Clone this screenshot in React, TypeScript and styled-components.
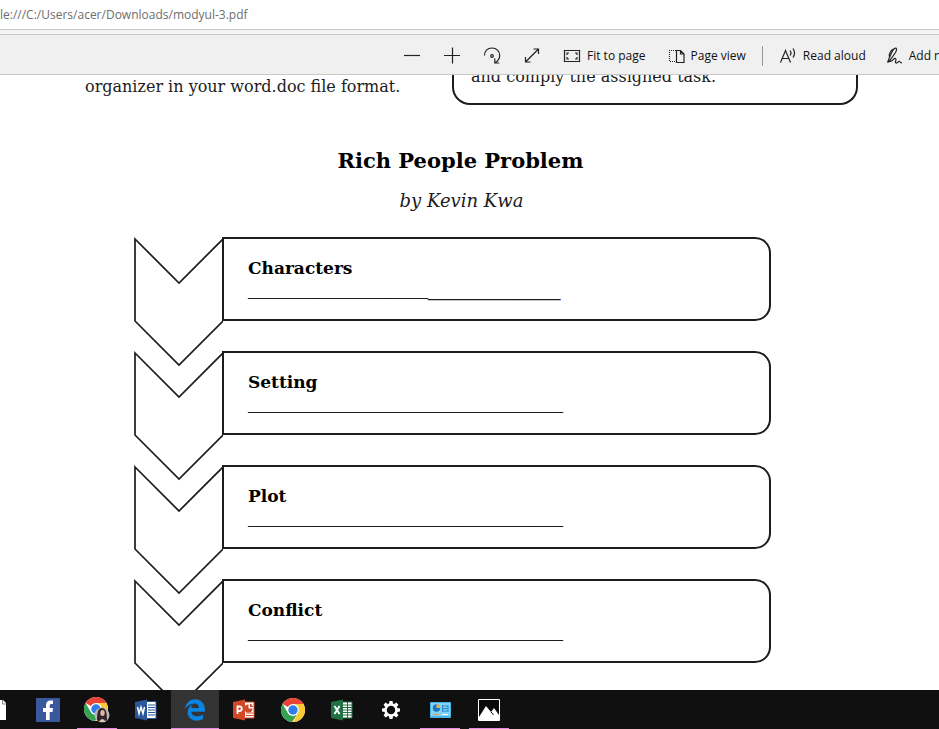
import React from "react";
import styled, { createGlobalStyle } from "styled-components";
import { FaEdgeLegacy } from "react-icons/fa6";

const GlobalStyle = createGlobalStyle`
  * { box-sizing: border-box; }
  body { margin: 0; background: #fff; }
  h1, h2, p { margin: 0; }
`;

const uiFont = `"Open Sans", "Noto Sans", sans-serif`;
const bookFont = `"DejaVu Serif", "Liberation Serif", serif`;
const ink = "#1c1c1c";

const Screen = styled.div`
  display: flex;
  flex-direction: column;
  height: 100vh;
  overflow: hidden;
`;

const AddressBar = styled.header`
  flex: none;
  height: 29px;
  font: 12px/30px ${uiFont};
  color: #6e6e6e;
  white-space: nowrap;
`;

const Divider = styled.div`
  flex: none;
  height: 6px;
  background: #f4f4f4;
  border-top: 1px solid #c8c8c8;
  border-bottom: 1px solid #c8c8c8;
`;

const Toolbar = styled.nav`
  flex: none;
  display: flex;
  align-items: center;
  height: 40px;
  padding: 2px 0 0 402px;
  background: #f0f0f0;
  border-bottom: 1px solid #c8c8c8;
  overflow: hidden;
`;

const ToolButton = styled.button<{ $gap?: number }>`
  flex: none;
  display: flex;
  align-items: center;
  gap: 6px;
  margin: 0 ${(p) => p.$gap ?? 20}px 0 0;
  padding: 0;
  border: 0;
  background: none;
  color: #111;
  font: 12px/20px ${uiFont};
  white-space: nowrap;
  svg { display: block; flex: none; }
`;

const ToolSeparator = styled.span`
  flex: none;
  width: 1px;
  height: 20px;
  margin-right: 16px;
  background: #999;
`;

const Viewer = styled.main`
  flex: 1;
  min-height: 0;
  overflow: hidden;
  background: #fff;
  color: ${ink};
  font-family: ${bookFont};
`;

const Sheet = styled.article`
  padding: 0 81px 0 85px;
`;

const Intro = styled.div`
  display: flex;
  justify-content: space-between;
  align-items: flex-start;
  margin-top: -12px;
`;

const IntroText = styled.p`
  padding-top: 12px;
  font-size: 16px;
  line-height: 24px;
  white-space: nowrap;
`;

const TaskBox = styled.p`
  flex: 0 0 406px;
  height: 42px;
  padding: 2px 17px;
  border: 2px solid ${ink};
  border-top: 0;
  border-radius: 0 0 18px 18px;
  font-size: 16px;
  line-height: 24px;
  white-space: nowrap;
`;

const Heading = styled.h1`
  margin-top: 42px;
  padding-right: 22px;
  color: #000;
  font-size: 21px;
  line-height: 28px;
  text-align: center;
`;

const Byline = styled.p`
  margin-top: 14px;
  padding-right: 20px;
  font-size: 18px;
  font-style: italic;
  line-height: 24px;
  text-align: center;
`;

const Organizer = styled.section`
  display: flex;
  flex-direction: column;
  gap: 30px;
  margin: 24px 87px 0 48px;
`;

const Step = styled.div`
  display: flex;
  align-items: flex-start;
  height: 84px;
`;

const Chevron = styled.svg`
  display: block;
  flex: none;
  width: 90px;
  height: 130px;
  margin-right: -1px;
`;

const StepBox = styled.div`
  flex: 1;
  height: 84px;
  padding: 17px 24px;
  border: 2px solid ${ink};
  border-radius: 0 16px 16px 0;
  white-space: nowrap;
`;

const StepTitle = styled.h2`
  color: #000;
  font-size: 17px;
  line-height: 24px;
`;

const Blank = styled.p`
  font: 18px/22px "Liberation Serif", serif;
`;

const BlankTail = styled.span`
  font: 17px/22px "Liberation Sans", sans-serif;
`;

const Taskbar = styled.footer`
  flex: none;
  display: flex;
  height: 39px;
  background: #101010;
  overflow: hidden;
`;

const TaskButton = styled.button<{ $active?: boolean }>`
  flex: none;
  display: flex;
  align-items: center;
  justify-content: center;
  width: 48px;
  margin-right: 1px;
  padding: 0;
  border: 0;
  background: ${(p) => (p.$active ? "#333" : "transparent")};
  box-shadow: ${(p) => (p.$active ? "inset 0 -1px #e78be7" : "none")};
  svg { display: block; }
  &:first-child { width: 23px; justify-content: flex-start; }
`;

const RunningButton = styled(TaskButton)`
  background: linear-gradient(#e78be7, #e78be7) center bottom / 40px 1px no-repeat;
`;

const line = { fill: "none", stroke: "#222", strokeWidth: 1.2 };

const ChromeLogo = () => (
  <>
    <circle cx="12" cy="12" r="12" fill="#fff" />
    <path d="M12 12 1.6 6A12 12 0 0 1 22.4 6Z" fill="#ea4335" />
    <path d="M1.6 6 6.8 15 12 18l-1 6A12 12 0 0 1 1.6 6Z" fill="#34a350" />
    <path d="m11 24 6.2-9L12 17.4 9 17Z" fill="#34a350" />
    <path d="m17.2 15-5.2 9a12 12 0 0 0 10.400-18H12Z" fill="#fbc934" />
    <circle cx="12" cy="12" r="5.9" fill="#fff" />
    <circle cx="12" cy="12" r="4.7" fill="#2f7de9" />
  </>
);

const steps = [
  { title: "Characters", blank: 20, tail: 14 },
  { title: "Setting", blank: 35, tail: 0 },
  { title: "Plot", blank: 35, tail: 0 },
  { title: "Conflict", blank: 35, tail: 0 },
];

export default function App() {
  return (
    <Screen>
      <GlobalStyle />
      <AddressBar>le:///C:/Users/acer/Downloads/modyul-3.pdf</AddressBar>
      <Divider />
      <Toolbar aria-label="PDF tools">
        <ToolButton aria-label="Zoom out">
          <svg width="20" height="20"><path d="M2 9.500h16" {...line} /></svg>
        </ToolButton>
        <ToolButton aria-label="Zoom in">
          <svg width="20" height="20"><path d="M2 9.500h16M10.500 1.500v16" {...line} /></svg>
        </ToolButton>
        <ToolButton aria-label="Rotate">
          <svg width="20" height="20">
            <path d="M2.500 9.500C2.300 5 5.500 2 10 2s7.700 3.300 7.700 7.500c0 3-1.700 5.500-4.700 7.500M12.800 12.500V17h4.500" {...line} />
            <circle cx="10" cy="10" r="1.300" {...line} />
          </svg>
        </ToolButton>
        <ToolButton aria-label="Full screen">
          <svg width="20" height="20"><path d="M3.500 16 16.500 3M11.500 3h5v5M3.500 11v5h5" {...line} /></svg>
        </ToolButton>
        <ToolButton $gap={22}>
          <svg width="19" height="14">
            <path d="M2.500 1.500h15v11h-15z" {...line} />
            <path d="M5 6V4h2M13 4h2v2M15 8v2h-2M7 10H5V8" {...line} />
          </svg>
          Fit to page
        </ToolButton>
        <ToolButton $gap={16}>
          <svg width="17" height="16">
            <path d="M8 2.500H1.500v11H8" {...line} strokeDasharray="1 1" />
            <path d="M8.500 2.500h4l3.500 3.500v8.500H8.500zM12.500 2.500V6H16" {...line} />
          </svg>
          Page view
        </ToolButton>
        <ToolSeparator />
        <ToolButton $gap={20}>
          <svg width="18" height="18">
            <path d="m1.500 15.500 5-12 5 12M3.300 11.500h6.500M11 3.500q2 2.500 0 5M14 1.500q3 4.500 0 9" {...line} />
          </svg>
          Read aloud
        </ToolButton>
        <ToolButton>
          <svg width="17" height="18">
            <path d="M1.500 15.500C3.500 11 6 3 8.500 1.500S11 3 9.500 5.500L3.500 14l-2 1.500M3.500 10C2.500 7 5 3 7.500 2M3.500 14.500c3.500.5 4-4 6-3s-1.500 4 .5 4.500 2-2 3.500-1.500.5 1.500 2.500 1.500" {...line} />
          </svg>
          Add notes
        </ToolButton>
      </Toolbar>

      <Viewer>
        <Sheet>
          <Intro>
            <IntroText>organizer in your word.doc file format.</IntroText>
            <TaskBox>and comply the assigned task.</TaskBox>
          </Intro>
          <Heading>Rich People Problem</Heading>
          <Byline>by Kevin Kwa</Byline>
          <Organizer>
            {steps.map((step) => (
              <Step key={step.title}>
                <Chevron viewBox="0 0 90 130" aria-hidden="true">
                  <path d="M2 2 46 46 90 2V84L46 128 2 84Z" fill="none" stroke={ink} strokeWidth="1.700" />
                </Chevron>
                <StepBox>
                  <StepTitle>{step.title}</StepTitle>
                  <Blank>
                    {"_".repeat(step.blank)}
                    {step.tail > 0 && <BlankTail>{"_".repeat(step.tail)}</BlankTail>}
                  </Blank>
                </StepBox>
              </Step>
            ))}
          </Organizer>
        </Sheet>
      </Viewer>

      <Taskbar>
        <TaskButton aria-label="Document">
          <svg width="7" height="22"><path d="M0 1h3l3 3v17H0z" fill="#fff" /><path d="M2.500 1v4H6" fill="none" stroke="#888" /></svg>
        </TaskButton>
        <TaskButton aria-label="Facebook">
          <svg width="24" height="24">
            <rect width="24" height="24" rx="1" fill="#3b579d" />
            <path d="M10 22v-8H7v-4h3V7.500C10 4 12 2.500 14.500 2.500H17V6h-1.800C14 6 13.700 6.800 13.700 8v2H17l-.5 4h-2.800v8z" fill="#fff" />
          </svg>
        </TaskButton>
        <RunningButton aria-label="Chrome profile">
          <svg width="26" height="26" viewBox="0 0 26 26">
            <ChromeLogo />
            <circle cx="18" cy="18" r="7.500" fill="#b9b7b6" />
            <path d="M13 23c0-8 1-12 5-12s5 5 5 12q-5 5-10 0" fill="#34252a" />
            <ellipse cx="18.500" cy="16" rx="2.200" ry="3" fill="#e5b7a5" />
            <path d="M15 25q3-6 7 0z" fill="#d9c5c2" />
          </svg>
        </RunningButton>
        <TaskButton aria-label="Word">
          <svg width="24" height="22">
            <path d="M12 2.500h10v17H12z" fill="#fff" stroke="#2b579a" />
            <path d="M14 6h7M14 8.500h7M14 11h7M14 13.500h7M14 16h7" stroke="#2b579a" />
            <path d="m1 3 12-2.500v21L1 19z" fill="#2b579a" />
            <path d="m3.500 8 1.500 6.500L7 8l2 6.500L10.500 8" fill="none" stroke="#fff" strokeWidth="1.500" />
          </svg>
        </TaskButton>
        <TaskButton $active aria-label="Edge">
          <FaEdgeLegacy size={22} color="#0a84e0" />
        </TaskButton>
        <TaskButton aria-label="PowerPoint">
          <svg width="24" height="22">
            <path d="M12 3h10v16H12z" fill="#fff" stroke="#d24726" />
            <path d="M14 14h7M14 16.500h7" stroke="#d24726" />
            <path d="M16.500 5.500v4h4a4 4 0 1 1-4-4M18 4.500a4 4 0 0 1 3 3.500h-3z" fill="#d24726" />
            <path d="m1 3 12-2.500v21L1 19z" fill="#d24726" />
            <path d="M5.500 15V7.500h2a2.200 2.200 0 0 1 0 4.500h-2" fill="none" stroke="#fff" strokeWidth="1.800" />
          </svg>
        </TaskButton>
        <TaskButton aria-label="Chrome">
          <svg width="24" height="24"><ChromeLogo /></svg>
        </TaskButton>
        <TaskButton aria-label="Excel">
          <svg width="24" height="22">
            <path d="M12 3h10v16H12z" fill="#fff" stroke="#207245" />
            <path d="M13 6h9M13 8.500h9M13 11h9M13 13.500h9M13 16h9M17.500 3v16" stroke="#207245" />
            <path d="m1 3 12-2.500v21L1 19z" fill="#207245" />
            <path d="m4.500 7 5 8M9.500 7l-5 8" stroke="#fff" strokeWidth="1.900" />
          </svg>
        </TaskButton>
        <TaskButton aria-label="Settings">
          <svg width="20" height="20" viewBox="-10 -10 20 20">
            <circle r="5.500" fill="none" stroke="#fff" strokeWidth="2.500" />
            {[0, 45, 90, 135, 180, 225, 270, 315].map((angle) => (
              <path key={angle} d="M-2-6-1.500-9h3L2-6z" fill="#fff" transform={`rotate(${angle})`} />
            ))}
          </svg>
        </TaskButton>
        <RunningButton aria-label="Control Panel">
          <svg width="21" height="16">
            <rect width="21" height="16" rx="1" fill="#48b5e9" />
            <rect x="1" y="1" width="19" height="13" fill="#82d2f6" />
            <circle cx="6.500" cy="6" r="3.700" fill="#1d73c4" />
            <path d="M6.500 6V2.300A3.700 3.700 0 0 1 10.200 6z" fill="#f7b34b" />
            <path d="M13 4h5M13 6.500h5M13 9h5M12.500 3v7M18 3v7" stroke="#2688c6" />
            <path d="M3 12.500h6" stroke="#f09435" />
            <path d="M12 12.500h6" stroke="#fff" />
          </svg>
        </RunningButton>
        <RunningButton aria-label="Photos">
          <svg width="22" height="22">
            <path d="M.5.5h21v21H.5z" fill="#080808" stroke="#fff" />
            <path d="M1 18 8 7l5 6 3-4 5 7v5H1z" fill="#fff" />
            <path d="m13 13 2.500 3" stroke="#111" />
          </svg>
        </RunningButton>
      </Taskbar>
    </Screen>
  );
}
